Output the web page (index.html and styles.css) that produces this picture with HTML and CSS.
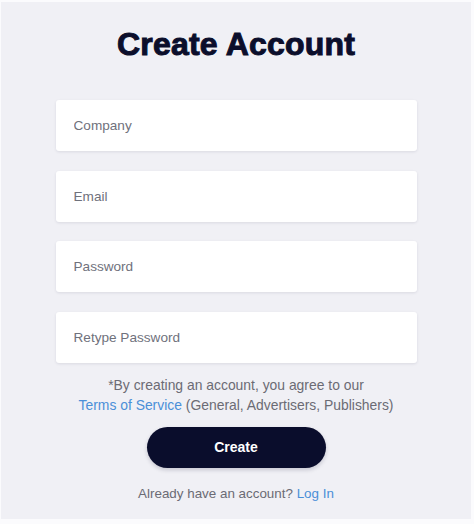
FILE: index.html
```html
<!DOCTYPE html>
<html lang="en">
<head>
<meta charset="utf-8">
<title>Create Account</title>
<link rel="stylesheet" href="styles.css">
</head>
<body>
<main class="page">
  <h1 class="title">Create Account</h1>
  <form class="form">
    <input class="field" type="text" placeholder="Company">
    <input class="field" type="email" placeholder="Email">
    <input class="field" type="password" placeholder="Password">
    <input class="field" type="password" placeholder="Retype Password">
  </form>
  <p class="terms">*By creating an account, you agree to our<br><a class="link" href="#">Terms of Service</a> (General, Advertisers, Publishers)</p>
  <button class="btn" type="button">Create</button>
  <p class="login">Already have an account? <a class="link" href="#">Log In</a></p>
</main>
</body>
</html>
```

FILE: styles.css
```css
html, body {
  margin: 0;
  padding: 0;
}
body {
  background: #fbfbfd;
  font-family: "Liberation Sans", Arial, sans-serif;
}
.page {
  box-sizing: border-box;
  margin: 2px 3px 5px 1px;
  height: 517px;
  background: #f0f0f5;
  display: flex;
  flex-direction: column;
  align-items: center;
  padding-top: 22px;
}
.title {
  margin: 0;
  font-size: 32px;
  line-height: 40px;
  font-weight: 700;
  color: #0b0e2b;
  -webkit-text-stroke: 1px #0b0e2b;
  letter-spacing: 0.2px;
}
.form {
  margin-top: 36px;
  display: flex;
  flex-direction: column;
  gap: 19.6px;
}
.field {
  box-sizing: border-box;
  width: 361px;
  height: 51px;
  border: none;
  border-radius: 3px;
  background: #ffffff;
  box-shadow: 0 1px 3px rgba(20, 20, 60, 0.10);
  padding: 0 18px;
  font-family: "Liberation Sans", Arial, sans-serif;
  font-size: 13.6px;
  color: #333;
  outline: none;
}
.field::placeholder {
  color: #6f717c;
}
.terms {
  margin: 12px 0 0;
  text-align: center;
  font-size: 13.9px;
  line-height: 20px;
  color: #6b6b74;
}
.link {
  color: #4a8fd8;
  text-decoration: none;
}
.btn {
  margin-top: 12px;
  width: 179px;
  height: 41px;
  border: none;
  border-radius: 21px;
  background: #0a0d2c;
  color: #ffffff;
  font-family: "Liberation Sans", Arial, sans-serif;
  font-size: 14px;
  font-weight: 700;
  box-shadow: 0 2px 4px rgba(10, 13, 44, 0.18);
  cursor: pointer;
}
.login {
  margin: 16px 0 0;
  font-size: 13.4px;
  line-height: 20px;
  color: #6b6b74;
}
```
